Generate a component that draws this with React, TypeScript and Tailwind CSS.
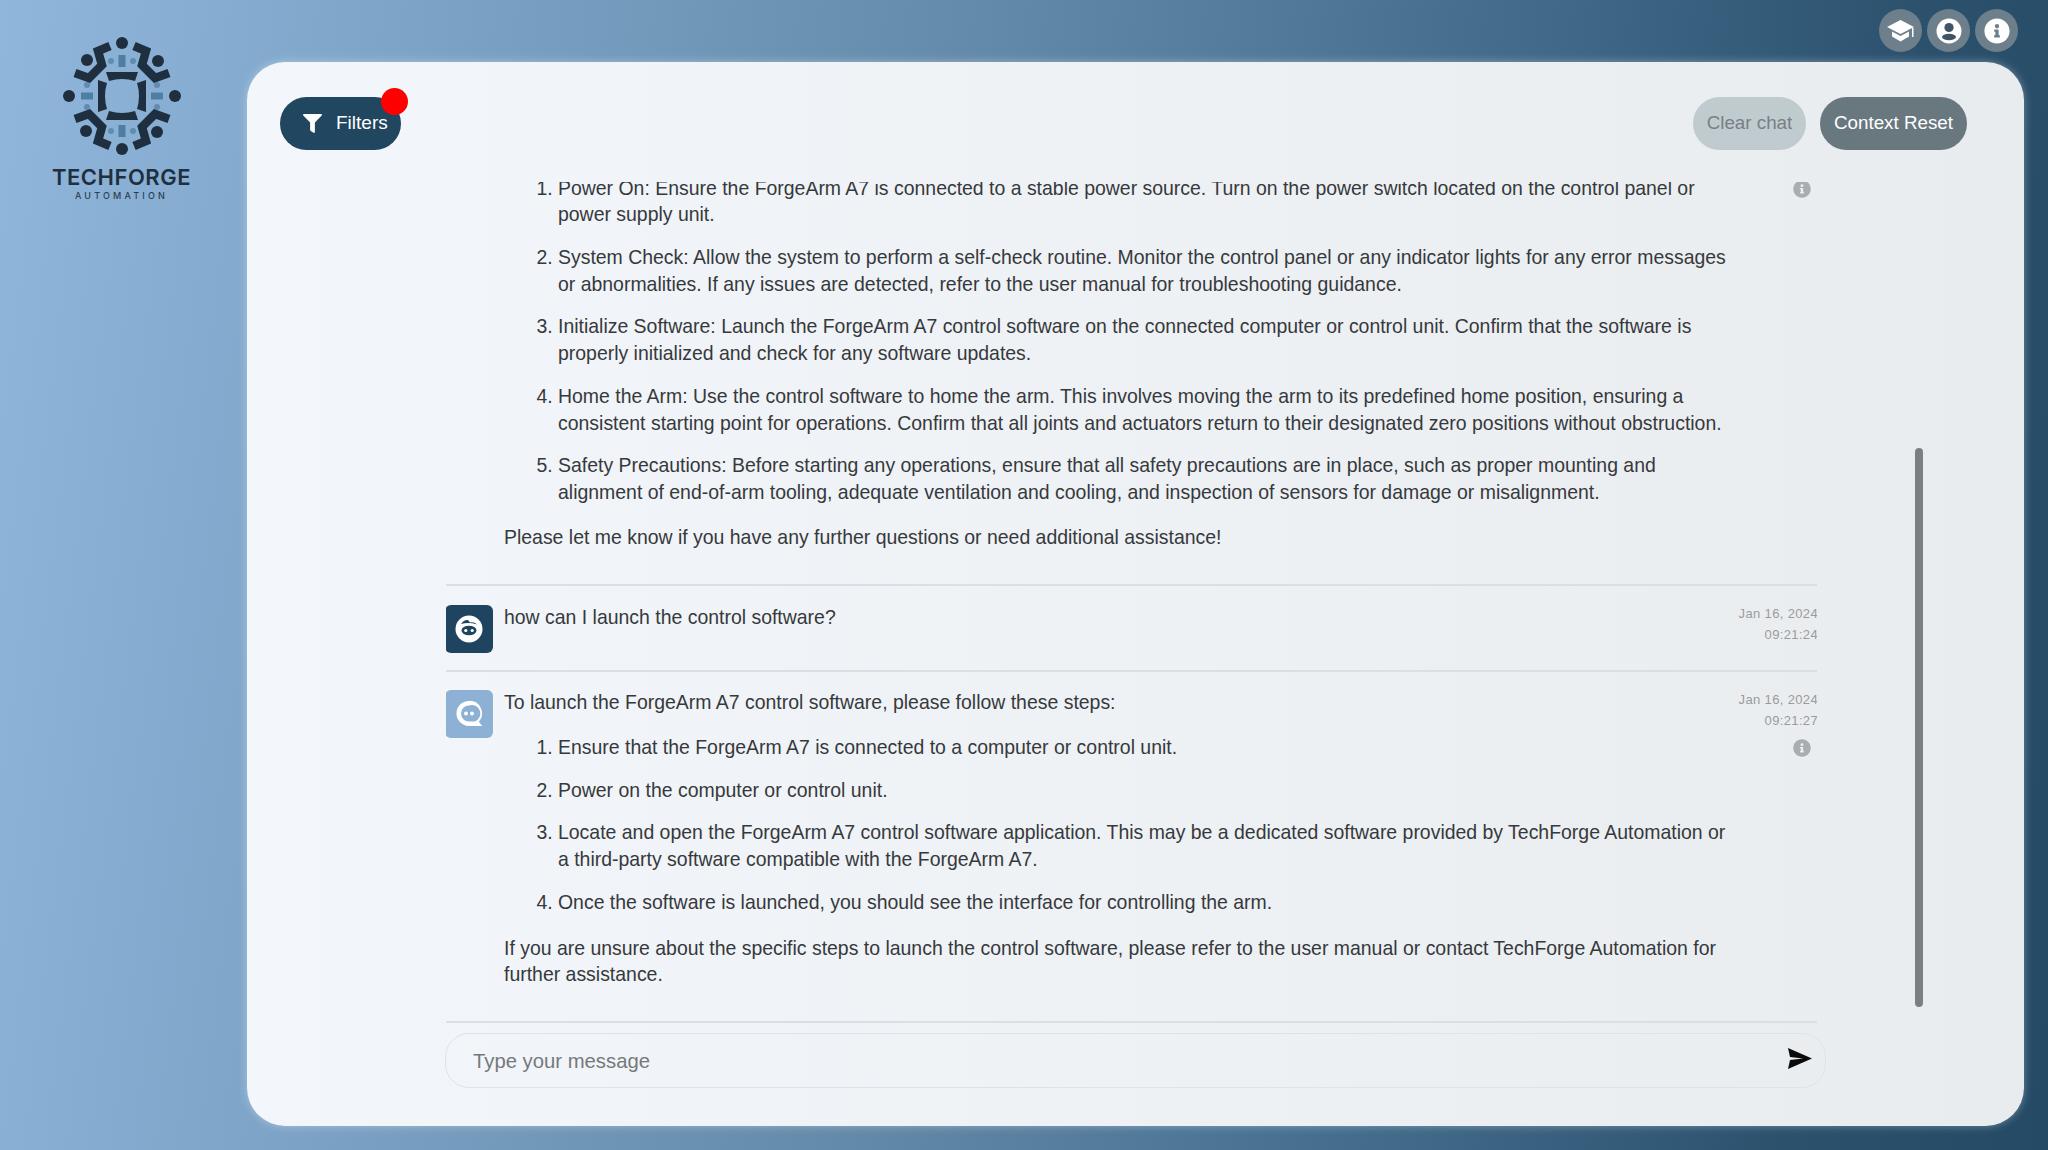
import { FaFilter, FaInfoCircle } from 'react-icons/fa';

const FONT = "font-['Liberation_Sans',Arial,sans-serif]";

function Logo() {
  const arm = 'M-12 -50 L-24 -45 L-20 -31 L-33 -18 L-47 -23';
  return (
    <svg width="118" height="118" viewBox="-59 -59 118 118">
      <g fill="#1f2f3f">
        {[0, 90, 180, 270].map((r) => (
          <g key={r} transform={`rotate(${r})`}>
            <circle cx="0" cy="-53" r="6" />
            <circle cx="-35" cy="-36" r="6" />
            <path d="M-16 -24 L16 -24 L13 -15 Q0 -19 -13 -15 Z" />
            <rect x="-3.5" y="-41" width="7" height="12" fill="#4f7ea3" />
            <circle cx="-11" cy="-35" r="3" fill="#5f8db0" />
            <circle cx="11" cy="-35" r="3" fill="#5f8db0" />
          </g>
        ))}
      </g>
      <g fill="none" stroke="#1f2f3f" strokeWidth="8.5" strokeLinejoin="miter">
        {[0, 180].map((r) => (
          <g key={r} transform={`rotate(${r})`}>
            <path d={arm} />
            <path d={arm} transform="scale(-1 1)" />
          </g>
        ))}
      </g>
    </svg>
  );
}

function CapIcon() {
  return (
    <svg width="27" height="22" viewBox="0 0 27 22">
      <path d="M0 7 L13.5 0 L27 7 L13.5 14 Z" fill="#fff" />
      <path d="M5 11.5 L13.5 16 L22 11.5 V16.5 L13.5 21.5 L5 16.5 Z" fill="#fff" />
      <rect x="25" y="8" width="1.5" height="9" fill="#fff" />
    </svg>
  );
}

function PersonIcon() {
  return (
    <svg width="26" height="26" viewBox="0 0 26 26">
      <circle cx="13" cy="13" r="12.5" fill="#fff" />
      <circle cx="13" cy="9.5" r="4.6" fill="#3d5565" />
      <ellipse cx="13" cy="19" rx="7" ry="3.2" fill="#3d5565" />
    </svg>
  );
}

function BotIcon() {
  return (
    <svg width="30" height="30" viewBox="2 2 24 24">
      <path d="M14 3.5a10 10 0 1 0 0 20h10.5l-2.6-3.4A10 10 0 0 0 14 3.5Z" fill="#fff" />
      <path d="M14 7.2a6.4 6.4 0 1 0 0 12.8h4.6a6.4 6.4 0 0 0-4.6-12.8Z" fill="#8db1d4" />
      <circle cx="11.6" cy="13.5" r="1.6" fill="#fff" />
      <circle cx="16.4" cy="13.5" r="1.6" fill="#fff" />
    </svg>
  );
}

function UserIcon() {
  return (
    <svg width="28" height="28" viewBox="0 0 28 28">
      <circle cx="14" cy="14" r="13.5" fill="#fff" />
      <path d="M6 9 Q9 4.5 13 5 L15 7.5 Q19 6.5 22 9.5 Q14 7 6 9 Z" fill="#1f4460" />
      <ellipse cx="14" cy="15.5" rx="7.5" ry="4.8" fill="#1f4460" />
      <circle cx="10.8" cy="15.5" r="1.6" fill="#fff" />
      <circle cx="17.2" cy="15.5" r="1.6" fill="#fff" />
    </svg>
  );
}

function Steps({ items }: { items: string[] }) {
  return (
    <ol className="list-decimal pl-[54px] mt-[18px] flex flex-col gap-[16px]">
      {items.map((t) => (
        <li key={t}>{t}</li>
      ))}
    </ol>
  );
}

function Stamp({ date, time }: { date: string; time: string }) {
  return (
    <div className="-mr-[1px] text-right text-[13px] leading-[20.5px] tracking-[0.35px] text-[#9b9b9b]">
      <div>{date}</div>
      <div>{time}</div>
    </div>
  );
}

const firstSteps = [
  'Power On: Ensure the ForgeArm A7 is connected to a stable power source. Turn on the power switch located on the control panel or power supply unit.',
  'System Check: Allow the system to perform a self-check routine. Monitor the control panel or any indicator lights for any error messages or abnormalities. If any issues are detected, refer to the user manual for troubleshooting guidance.',
  'Initialize Software: Launch the ForgeArm A7 control software on the connected computer or control unit. Confirm that the software is properly initialized and check for any software updates.',
  'Home the Arm: Use the control software to home the arm. This involves moving the arm to its predefined home position, ensuring a consistent starting point for operations. Confirm that all joints and actuators return to their designated zero positions without obstruction.',
  'Safety Precautions: Before starting any operations, ensure that all safety precautions are in place, such as proper mounting and alignment of end-of-arm tooling, adequate ventilation and cooling, and inspection of sensors for damage or misalignment.',
];

const secondSteps = [
  'Ensure that the ForgeArm A7 is connected to a computer or control unit.',
  'Power on the computer or control unit.',
  'Locate and open the ForgeArm A7 control software application. This may be a dedicated software provided by TechForge Automation or a third-party software compatible with the ForgeArm A7.',
  'Once the software is launched, you should see the interface for controlling the arm.',
];

export default function App() {
  return (
    <div className={`${FONT} relative flex h-[1150px] w-[2048px] overflow-hidden bg-[linear-gradient(97deg,#90b7db_0%,#7ca3c6_20%,#648aa9_45%,#477090_66%,#2b516d_88%,#244a66_100%)]`}>
      {/* Sidebar */}
      <div className="w-[247px] shrink-0 flex flex-col items-center pt-[37px] pr-[4px]">
        <Logo />
        <div className="mt-[9px] font-['Inter',sans-serif] text-[22px] leading-[26px] font-semibold tracking-[0.5px] text-[#1f2f3f]">TECHFORGE</div>
        <div className="font-['Inter',sans-serif] text-[9px] leading-[12px] font-medium tracking-[3.2px] text-[#2c3e50]">AUTOMATION</div>
      </div>

      <div className="flex-1 flex flex-col pr-[24px]">
        {/* Top icons */}
        <div className="h-[62px] flex items-start justify-end gap-[5px] pt-[9px] pr-[6px]">
          <div className="w-[43px] h-[43px] rounded-full bg-[#6d7f8a] flex items-center justify-center"><CapIcon /></div>
          <div className="w-[43px] h-[43px] rounded-full bg-[#6d7f8a] flex items-center justify-center"><PersonIcon /></div>
          <div className="w-[43px] h-[43px] rounded-full bg-[#6d7f8a] flex items-center justify-center text-white"><FaInfoCircle size={26} /></div>
        </div>

        {/* Main panel */}
        <div className="relative h-[1064px] rounded-[38px] bg-gradient-to-r from-[#f3f6fa] to-[#e9ecef] shadow-[0_0_8px_rgba(255,255,255,0.35)] pt-[35px] flex flex-col">
          <div className="flex items-center justify-between pl-[33px] pr-[57px]">
            <div className="relative h-[53px] w-[121px] rounded-full bg-[#21465f] text-white text-[19px] flex items-center gap-[14px] pl-[23px]">
              <FaFilter size={19} />
              <span>Filters</span>
              <span className="absolute -top-[9px] -right-[7px] w-[27px] h-[27px] rounded-full bg-[#ff0000]" />
            </div>
            <div className="flex gap-[14px] text-[18.8px]">
              <div className="h-[53px] w-[113px] rounded-full bg-[#c0cbd0] text-[#7a7f83] flex items-center justify-center">Clear chat</div>
              <div className="h-[53px] w-[147px] rounded-full bg-[#69787f] text-white flex items-center justify-center">Context Reset</div>
            </div>
          </div>

          {/* Chat */}
          <div className="mt-[32px] ml-[199px] mr-[207px] h-[841px] overflow-hidden flex flex-col justify-end border-b-2 border-[#d8e0e4] text-[19.45px] leading-[26.7px] text-[#36393c]">
            <div className="shrink-0 flex border-b-2 border-[#d8e0e4] pb-[34px]">
              <div className="w-[58px] shrink-0" />
              <div className="w-[1228px] shrink-0">
                <Steps items={firstSteps} />
                <p className="mt-[18px]">Please let me know if you have any further questions or need additional assistance!</p>
              </div>
              <div className="ml-auto mr-[6px] mt-[23px] text-[#a9adb1]"><FaInfoCircle size={18} /></div>
            </div>

            <div className="shrink-0 flex pt-[18px] pb-[17px] border-b-2 border-[#d8e0e4]">
              <div className="w-[48px] h-[48px] mt-[1px] mr-[11px] -ml-[1px] rounded-[6px] bg-[#1f4460] flex items-center justify-center shrink-0"><UserIcon /></div>
              <div className="flex-1">how can I launch the control software?</div>
              <Stamp date="Jan 16, 2024" time="09:21:24" />
            </div>

            <div className="shrink-0 flex pt-[17px] pb-[33px]">
              <div className="w-[48px] h-[48px] mt-[1px] mr-[11px] -ml-[1px] rounded-[6px] bg-[#8db1d4] flex items-center justify-center shrink-0"><BotIcon /></div>
              <div className="w-[1227px] shrink-0">
                <p>To launch the ForgeArm A7 control software, please follow these steps:</p>
                <Steps items={secondSteps} />
                <p className="mt-[19px]">If you are unsure about the specific steps to launch the control software, please refer to the user manual or contact TechForge Automation for further assistance.</p>
              </div>
              <div className="ml-auto mt-[1px] flex flex-col items-end">
                <Stamp date="Jan 16, 2024" time="09:21:27" />
                <div className="mt-[8px] mr-[6px] text-[#a9adb1]"><FaInfoCircle size={18} /></div>
              </div>
            </div>
          </div>

          {/* Input */}
          <div className="mt-[10px] ml-[198px] mr-[198px] h-[55px] rounded-[24px] border border-[#dfe3e7] flex items-center pl-[27px] pr-[13px] text-[20.3px] text-[#75797d]">
            <span className="flex-1 mt-[2px]">Type your message</span>
            <svg width="24" height="21" viewBox="0 0 24 21" className="-mt-[4px]">
              <path d="M0 0 L24 10.5 L0 21 L2 12 L15 10.5 L2 9 Z" fill="#0b0b0b" />
            </svg>
          </div>

          {/* Scrollbar */}
          <div className="absolute left-[1668px] top-[386px] w-[8px] h-[559px] rounded-full bg-[#7c7f82]" />
        </div>
      </div>
    </div>
  );
}
